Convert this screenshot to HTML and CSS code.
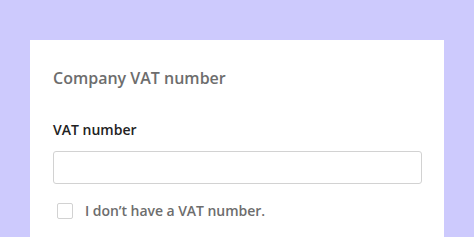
FILE: index.html
```html
<!DOCTYPE html>
<html lang="en">
<head>
    <meta charset="UTF-8">
    <meta name="viewport" content="width=device-width, initial-scale=1.0">
    <title>Company VAT number</title>
    <link rel="stylesheet" href="styles.css">
</head>
<body>
    <div class="card">
        <h2 class="title">Company VAT number</h2>
        <label class="field-label" for="vat">VAT number</label>
        <input class="field" type="text" id="vat" name="vat">
        <label class="check">
            <span class="box"></span>
            <span>I don’t have a VAT number.</span>
        </label>
    </div>
</body>
</html>
```

FILE: styles.css
```css
body {
    margin: 0;
    height: 237px;
    overflow: hidden;
    background: #cdcafd;
    font-family: "Open Sans", "Liberation Sans", sans-serif;
}
.card {
    margin: 40px 30px 0 30px;
    height: 197px;
    background: #fff;
    padding: 27px 22px 0 23px;
    box-sizing: border-box;
    display: flex;
    flex-direction: column;
}
.title {
    margin: 0;
    font-size: 16px;
    font-weight: 600;
    color: #6d6d6d;
    line-height: 22px;
}
.field-label {
    margin-top: 31px;
    font-size: 14px;
    font-weight: 600;
    color: #222;
    line-height: 20px;
}
.field {
    margin-top: 11px;
    height: 33px;
    box-sizing: border-box;
    border: 1px solid #d2d2d2;
    border-radius: 3px;
    padding: 0 10px;
    font-size: 14px;
}
.check {
    margin-top: 17px;
    margin-left: 4px;
    display: flex;
    align-items: center;
    gap: 12px;
    font-size: 14px;
    font-weight: 600;
    color: #6d6d6d;
    letter-spacing: -0.05px;
}
.box {
    width: 14px;
    height: 14px;
    border: 1px solid #d2d2d2;
    border-radius: 2px;
}
```
